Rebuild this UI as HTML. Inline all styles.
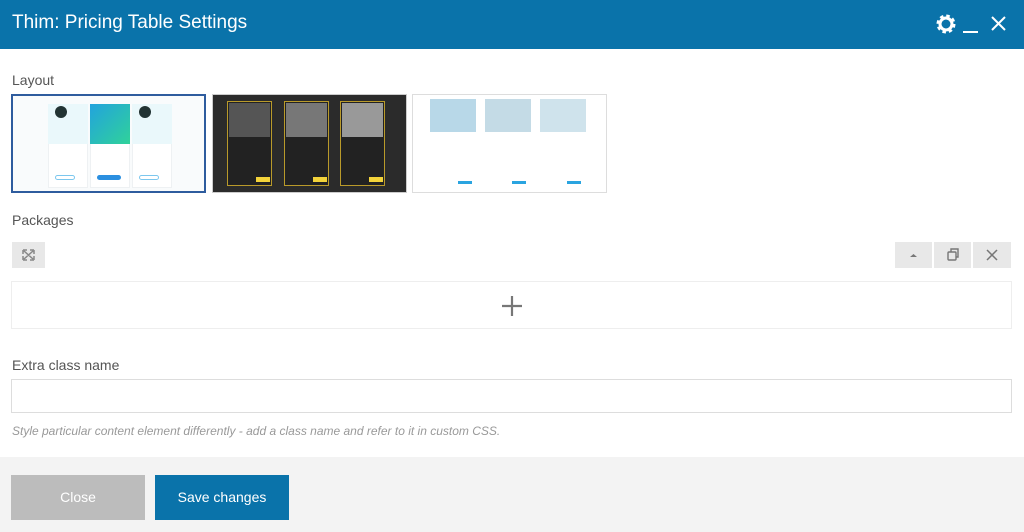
<!DOCTYPE html>
<html><head><style>
*{box-sizing:border-box;margin:0;padding:0}
body{width:1024px;height:532px;background:#fff;font-family:"Liberation Sans",sans-serif;position:relative;overflow:hidden;color:#555}
.hdr{position:absolute;left:0;top:0;width:1024px;height:49px;background:#0a73aa;color:#fff;font-size:19px;padding:12px 12px}
.lbl{position:absolute;left:12px;font-size:14px;color:#555}
.th{position:absolute;top:94px;width:195px;height:99px;border:1px solid #ddd}
.card{position:absolute;top:8px;width:40px;height:84px;background:#fff}
.btn{position:absolute;height:26px;background:#e8e8e8;top:242px}
.a{position:absolute}
</style></head><body>
<div class="hdr">Thim: Pricing Table Settings
<svg style="position:absolute;left:935px;top:13px" width="22" height="22" viewBox="0 0 22 22"><circle cx="11" cy="11" r="7" fill="none" stroke="#fff" stroke-width="5" stroke-dasharray="3 2.5"/><circle cx="11" cy="11" r="6" fill="none" stroke="#fff" stroke-width="3"/></svg>
<div style="position:absolute;left:963px;top:31px;width:15px;height:2px;background:#fff"></div>
<svg style="position:absolute;left:991px;top:16px" width="15" height="15"><path d="M1 1L14 14M14 1L1 14" stroke="#fff" stroke-width="2"/></svg>
</div>
<div class="lbl" style="top:72px">Layout</div>
<div class="th" style="left:11px;border:2px solid #2e5c9e;background:#f9fbfc">
 <div class="card" style="left:35px;height:84px;border:1px solid #eef1f3"></div>
 <div class="card" style="left:77px;height:84px;border:1px solid #eef1f3"></div>
 <div class="card" style="left:119px;height:84px;border:1px solid #eef1f3"></div>
 <div class="card" style="left:35px;background:#eaf8fb;height:40px"></div>
 <div class="card" style="left:77px;background:linear-gradient(135deg,#22a3dd,#30d29a);height:40px"></div>
 <div class="card" style="left:119px;background:#eaf8fb;height:40px"></div>
 <div class="a" style="left:42px;top:10px;width:12px;height:12px;border-radius:50%;background:#233"></div>
 <div class="a" style="left:126px;top:10px;width:12px;height:12px;border-radius:50%;background:#233"></div>
 <div class="a" style="left:42px;top:79px;width:20px;height:5px;border:1px solid #7cc7ee;border-radius:3px"></div>
 <div class="a" style="left:84px;top:79px;width:24px;height:5px;background:#2b8fe0;border-radius:3px"></div>
 <div class="a" style="left:126px;top:79px;width:20px;height:5px;border:1px solid #7cc7ee;border-radius:3px"></div>
</div>
<div class="th" style="left:212px;background:#2b2b2b;border-color:#ccc">
 <div class="card" style="left:14px;top:6px;width:45px;height:85px;background:#222;border:1px solid #b99a2a"></div>
 <div class="card" style="left:71px;top:6px;width:45px;height:85px;background:#222;border:1px solid #b99a2a"></div>
 <div class="card" style="left:127px;top:6px;width:45px;height:85px;background:#222;border:1px solid #b99a2a"></div>
 <div class="a" style="left:16px;top:8px;width:41px;height:34px;background:#555"></div>
 <div class="a" style="left:73px;top:8px;width:41px;height:34px;background:#777"></div>
 <div class="a" style="left:129px;top:8px;width:41px;height:34px;background:#999"></div>
 <div class="a" style="left:43px;top:82px;width:14px;height:5px;background:#f3d33a"></div>
 <div class="a" style="left:100px;top:82px;width:14px;height:5px;background:#f3d33a"></div>
 <div class="a" style="left:156px;top:82px;width:14px;height:5px;background:#f3d33a"></div>
</div>
<div class="th" style="left:412px;background:#fff">
 <div class="a" style="left:17px;top:4px;width:46px;height:33px;background:#b8d8e8"></div>
 <div class="a" style="left:72px;top:4px;width:46px;height:33px;background:#c4dbe6"></div>
 <div class="a" style="left:127px;top:4px;width:46px;height:33px;background:#cfe3ec"></div>
 <div class="a" style="left:45px;top:86px;width:14px;height:3px;background:#2aa4e0"></div>
 <div class="a" style="left:99px;top:86px;width:14px;height:3px;background:#2aa4e0"></div>
 <div class="a" style="left:154px;top:86px;width:14px;height:3px;background:#2aa4e0"></div>
</div>
<div class="lbl" style="top:212px">Packages</div>
<div class="btn" style="left:12px;width:33px"><svg width="33" height="26"><path d="M11 8h4M11 8v4M22 8h-4M22 8v4M11 18h4M11 18v-4M22 18h-4M22 18v-4M12 9l9 8M21 9l-9 8" stroke="#888" stroke-width="1.5" fill="none"/></svg></div>
<div class="btn" style="left:895px;width:37px"><svg width="37" height="26"><path d="M15 15h7l-3.5-3z" fill="#777"/></svg></div>
<div class="btn" style="left:934px;width:37px"><svg width="37" height="26"><rect x="14" y="10" width="8" height="8" rx="1" fill="none" stroke="#777" stroke-width="1.4"/><path d="M17 10V7h7v8h-2" fill="none" stroke="#777" stroke-width="1.4"/></svg></div>
<div class="btn" style="left:973px;width:38px"><svg width="38" height="26"><path d="M14 8l10 10M24 8l-10 10" stroke="#777" stroke-width="1.5"/></svg></div>
<div style="position:absolute;left:11px;top:281px;width:1001px;height:48px;border:1px solid #eee"><svg style="position:absolute;left:490px;top:14px" width="20" height="20"><path d="M10 0v20M0 10h20" stroke="#777" stroke-width="2.2"/></svg></div>
<div class="lbl" style="top:357px">Extra class name</div>
<div style="position:absolute;left:11px;top:379px;width:1001px;height:34px;border:1px solid #ddd"></div>
<div style="position:absolute;left:12px;top:424px;font-size:12px;font-style:italic;color:#999">Style particular content element differently - add a class name and refer to it in custom CSS.</div>
<div style="position:absolute;left:0;top:457px;width:1024px;height:75px;background:#f3f3f3"></div>
<div style="position:absolute;left:11px;top:475px;width:134px;height:45px;background:#bcbcbc;color:#fff;font-size:14px;text-align:center;line-height:45px">Close</div>
<div style="position:absolute;left:155px;top:475px;width:134px;height:45px;background:#0a73aa;color:#fff;font-size:14px;text-align:center;line-height:45px">Save changes</div>
</body></html>
